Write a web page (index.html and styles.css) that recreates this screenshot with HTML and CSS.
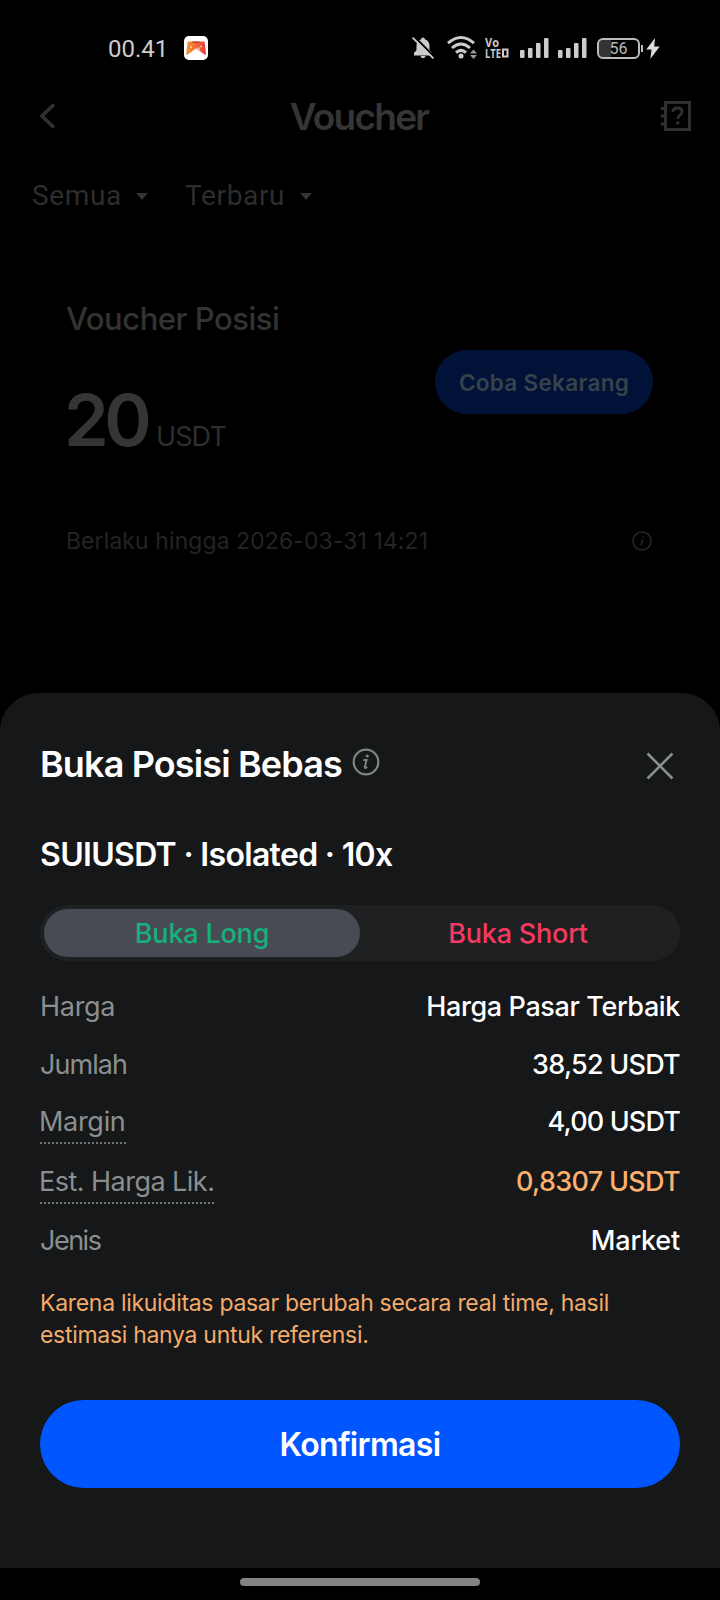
FILE: index.html
```
<!DOCTYPE html>
<html lang="id">
<head>
<meta charset="utf-8">
<title>Voucher</title>
<link rel="stylesheet" href="styles.css">
</head>
<body>
<div class="phone">
  <div class="page">
    <div class="status">
      <span class="clock">00.41</span>
      <svg class="app-icon" width="24" height="24" viewBox="0 0 24 24">
        <defs><linearGradient id="pad" x1="0" x2="1"><stop offset="0" stop-color="#f39a3c"/><stop offset=".5" stop-color="#ee6a35"/><stop offset="1" stop-color="#ee3b3f"/></linearGradient></defs>
        <rect width="24" height="24" rx="5" fill="#fff"/>
        <path d="M4.500 5.500h15q1 0 1.200 1l1.300 11q.2 1.800-1.200 1.200L12 12.500 3.400 18.700Q2 19.300 2.200 17.500L3.500 6.500q.1-1 1-1z" fill="url(#pad)"/>
        <path d="M8 5.500h8l-1.500 1.500h-5z" fill="#c4421d"/>
        <path d="M12 12.500l3.500-1.500 1 4.500z" fill="#f9b08a"/>
        <circle cx="7" cy="11" r="1" fill="#fbd0a0"/><circle cx="17" cy="10.500" r="1" fill="#fbb"/>
      </svg>
      <div class="indicators">
        <svg class="mute" width="22" height="22" viewBox="0 0 22 22">
          <path d="M11 .5c1 0 1.800.8 1.800 1.800C16 3.200 17.500 5.500 17.500 9v4l2.500 3v2.500H2V16l2.500-3V9c0-3.500 1.500-5.800 4.700-6.700C9.200 1.300 10 .5 11 .5zM8.500 19h5q-.5 2.300-2.500 2.300T8.500 19z" fill="#ccc"/>
          <path d="M2.200-.5 23 20.500" stroke="#000" stroke-width="2"/>
          <path d="M.6.600 21.400 21.400" stroke="#ccc" stroke-width="1.800"/>
        </svg>
        <svg class="wifi" width="31" height="24" viewBox="0 0 31 24" fill="none" stroke="#ccc" stroke-width="3">
          <path d="M1 7.200Q14 -4.200 27 7.200M5 12Q14 4 23 12M9 16.600Q14 12.200 19 16.600"/>
          <circle cx="14" cy="20" r="2.500" fill="#ccc" stroke="none"/>
          <path d="M26.500 13.500l3.500 4h-7zM26.500 23l3.500-4h-7z" fill="#999" stroke="none"/>
        </svg>
        <svg class="volte" width="24" height="20" viewBox="0 0 24 20" fill="#ccc">
          <text x="0" y="9" textLength="14" lengthAdjust="spacingAndGlyphs">Vo</text>
          <text x="0" y="19.500" textLength="16" lengthAdjust="spacingAndGlyphs">LTE</text>
          <rect x="18" y="11.500" width="4.500" height="7" fill="none" stroke="#ccc" stroke-width="2"/>
        </svg>
        <svg class="signal" width="29" height="20" viewBox="0 0 29 20" fill="#ccc"><rect y="12" width="4.500" height="8" rx="1"/><rect x="8" y="10" width="4.500" height="10" rx="1"/><rect x="16" y="5" width="4.500" height="15" rx="1"/><rect x="24" width="4.500" height="20" rx="1"/></svg>
        <svg class="signal" width="29" height="20" viewBox="0 0 29 20" fill="#ccc"><rect y="12" width="4.500" height="8" rx="1"/><rect x="8" y="10" width="4.500" height="10" rx="1"/><rect x="16" y="5" width="4.500" height="15" rx="1"/><rect x="24" width="4.500" height="20" rx="1"/></svg>
        <div class="battery"><span>56</span></div>
        <svg class="bolt" width="14" height="21" viewBox="0 0 14 21"><path d="M9 0 .300 11.500H5.500L4.300 21 13.700 8.500H8.200z" fill="#ddd"/></svg>
      </div>
    </div>

    <div class="header">
      <svg width="17" height="26" viewBox="0 0 17 26" fill="none" stroke="#303030" stroke-width="3.800"><path d="M15 1.500 3 13l12 11.500"/></svg>
      <h1>Voucher</h1>
      <svg width="30" height="30" viewBox="0 0 30 30" fill="none" stroke="#303030">
        <path d="M4.500 1.500h24v27h-24z" stroke-width="3"/>
        <path d="M0 7.500h4M0 15h4M0 23h4" stroke-width="3"/>
        <path d="M11.800 11q.2-4 4.700-4t4.600 3.700c0 3-4.400 3.300-4.400 7.300" stroke-width="2.800"/>
        <circle cx="16.700" cy="22" r="1.800" fill="#303030" stroke="none"/>
      </svg>
    </div>

    <div class="filters">
      <span class="filter">Semua</span><i class="caret"></i>
      <span class="filter second">Terbaru</span><i class="caret"></i>
    </div>

    <div class="card">
      <div class="card-main">
        <div>
          <h2>Voucher Posisi</h2>
          <div class="amount"><b>20</b><span>USDT</span></div>
        </div>
        <button class="try">Coba Sekarang</button>
      </div>
      <div class="card-foot">
        <span>Berlaku hingga 2026-03-31 14:21</span>
        <svg width="20" height="20" viewBox="0 0 20 20" fill="none" stroke="#262626"><circle cx="10" cy="10" r="9" stroke-width="1.600"/><path d="M10.600 8.500 9.300 14.500M11.200 5.200l-.3 1.500" stroke-width="1.600"/></svg>
      </div>
    </div>
  </div>

  <div class="sheet">
    <div class="sheet-head">
      <h2>Buka Posisi Bebas</h2>
      <svg class="info" width="28" height="28" viewBox="0 0 28 28" fill="none" stroke="#7f8484"><circle cx="14" cy="14" r="12.300" stroke-width="2.200"/><path d="M11.300 12h3.300l-1.800 7q-.2 1.200.9.900l1.600-.9" stroke-width="1.900"/><circle cx="15.200" cy="8" r="1.600" fill="#7f8484" stroke="none"/></svg>
      <svg class="close" width="26" height="26" viewBox="0 0 26 26" stroke="#8b9090" stroke-width="2.500"><path d="M.5.500l25 25M25.500.500l-25 25"/></svg>
    </div>
    <div class="pair">SUIUSDT · Isolated · 10x</div>
    <div class="tabs"><div class="tab long">Buka Long</div><div class="tab short">Buka Short</div></div>
    <div class="rows">
      <div class="row"><span class="label">Harga</span><span class="value v-price">Harga Pasar Terbaik</span></div>
      <div class="row"><span class="label l-qty">Jumlah</span><span class="value">38,52 USDT</span></div>
      <div class="row hinted"><span class="label hint">Margin</span><span class="value v-margin">4,00 USDT</span></div>
      <div class="row hinted"><span class="label hint l-liq">Est. Harga Lik.</span><span class="value v-liq">0,8307 USDT</span></div>
      <div class="row"><span class="label l-type">Jenis</span><span class="value v-type">Market</span></div>
    </div>
    <p class="note">Karena likuiditas pasar berubah secara real time, hasil<br>estimasi hanya untuk referensi.</p>
    <button class="confirm">Konfirmasi</button>
  </div>

  <div class="nav"><i></i></div>
</div>
</body>
</html>
```

FILE: styles.css
```
* { box-sizing: border-box; margin: 0; }
body { background: #000; font-family: Inter, "Liberation Sans", sans-serif; }
button { border: 0; padding: 0; font-family: inherit; }
svg { display: block; flex: none; overflow: visible; }
.phone { width: 720px; height: 1600px; display: flex; flex-direction: column; overflow: hidden; white-space: nowrap; }
.page { height: 693px; }

.status { height: 96px; padding-left: 108px; display: flex; align-items: center; }
.clock { width: 76px; padding-top: 2px; font: 400 24px/24px Roboto, sans-serif; letter-spacing: 0; color: #ccc; }
.indicators { margin-left: 204px; display: flex; align-items: center; }
.wifi { margin-left: 13px; }
.volte { margin-left: 7px; font: 700 12.500px "Open Sans", sans-serif; }
.signal { margin-left: 9px; }
.volte + .signal { margin-left: 11px; }
.battery { position: relative; width: 43px; height: 21px; margin-left: 10px; border: 2px solid #bbb; border-radius: 6px; background: linear-gradient(90deg, #333 30%, #000 30%); text-align: center; font: 400 16px/18px Roboto, sans-serif; color: #bbb; }
.battery::after { content: ""; position: absolute; right: -5px; top: 5px; width: 2px; height: 7px; background: #bbb; }
.bolt { margin-left: 6px; }

.header { height: 40px; padding: 0 29px 0 39px; display: flex; align-items: center; justify-content: space-between; }
.header h1 { padding-top: 2px; font: 600 37px/40px Inter, sans-serif; letter-spacing: -1.750px; color: #353535; margin-left: 1px; }

.filters { height: 40px; margin-top: 40px; padding-left: 32px; display: flex; align-items: center; }
.filter { width: 104px; font: 400 28px/40px Roboto, sans-serif; letter-spacing: .65px; color: #2d2d2d; }
.filter.second { width: 115px; margin-left: 37px; }
.caret { border: 6px solid transparent; border-top: 7px solid #333; border-bottom: 0; }

.card { padding: 83px 66px 0; }
.card-main { display: flex; justify-content: space-between; }
.card h2 { font-size: 31px; font-weight: 500; line-height: 40px; letter-spacing: -.48px; color: #333; }
.amount { display: flex; align-items: baseline; height: 80px; margin-top: 41px; line-height: 80px; color: #353535; }
.amount b { width: 92px; margin-left: -2px; font-size: 72px; font-weight: 600; letter-spacing: -4.700px; }
.amount span { font-size: 27px; letter-spacing: -.9px; color: #2e2e2e; }
.try { width: 218px; height: 64px; margin: 51px 1px 0 0; padding-top: 1px; border-radius: 32px; background: #001238; color: #39414a; font-size: 22.500px; font-weight: 600; letter-spacing: .3px; }
.card-foot { height: 30px; margin-top: 66px; display: flex; align-items: center; justify-content: space-between; padding-right: 2px; font-size: 22.800px; line-height: 30px; letter-spacing: .18px; color: #242424; }

.sheet { height: 875px; padding: 51px 40px 0; border-radius: 38px 38px 0 0; background: #151718; color: #fff; }
.sheet-head { height: 40px; display: flex; align-items: center; }
.sheet-head h2 { width: 312px; margin-left: -1px; padding-left: 1px; font-size: 36px; font-weight: 600; line-height: 40px; letter-spacing: -.870px; }
.info { margin: -4px 0 0 1px; }
.close { margin-left: auto; margin-right: 7px; margin-top: 4px; }
.pair { height: 40px; margin-top: 50px; font-size: 32px; font-weight: 600; line-height: 41px; letter-spacing: -.68px; }
.tabs { height: 56px; margin-top: 31px; padding: 4px; display: flex; border-radius: 28px; background: #1e2022; }
.tab { flex: 1; border-radius: 24px; padding-top: 1px; text-align: center; font-size: 27px; font-weight: 500; line-height: 48px; letter-spacing: -.2px; }
.long { background: #484b53; color: #16b07d; }
.short { color: #f6395f; }
.rows { margin-top: 25px; }
.row { height: 40px; margin-bottom: 17.500px; display: flex; justify-content: space-between; font-size: 27px; line-height: 41px; }
.hinted { margin-bottom: 19.500px; }
.label { letter-spacing: -.3px; color: #8b8f90; }
.hint { height: 43px; text-indent: -1px; border-bottom: 2px dotted #6f7374; }
.l-qty { letter-spacing: -.950px; }
.l-liq { letter-spacing: -.530px; }
.l-type { letter-spacing: -1.500px; }
.value { font-weight: 500; letter-spacing: -.75px; }
.v-price { letter-spacing: -.390px; }
.v-margin { letter-spacing: -.85px; }
.v-liq { letter-spacing: -.68px; color: #fdb06c; }
.v-type { letter-spacing: -.2px; }
.note { margin-top: 27px; font-size: 23px; line-height: 32px; letter-spacing: -.3px; color: #f4ab6b; }
.row:last-child { margin-bottom: 0; }
.confirm { display: block; width: 640px; height: 88px; margin-top: 49px; border-radius: 44px; background: #0056ff; color: #fff; font-size: 32px; font-weight: 600; letter-spacing: -.660px; }

.nav { height: 32px; padding-top: 10px; background: #000; }
.nav i { display: block; width: 240px; height: 8px; margin: 0 auto; border-radius: 4px; background: #828282; }
```
